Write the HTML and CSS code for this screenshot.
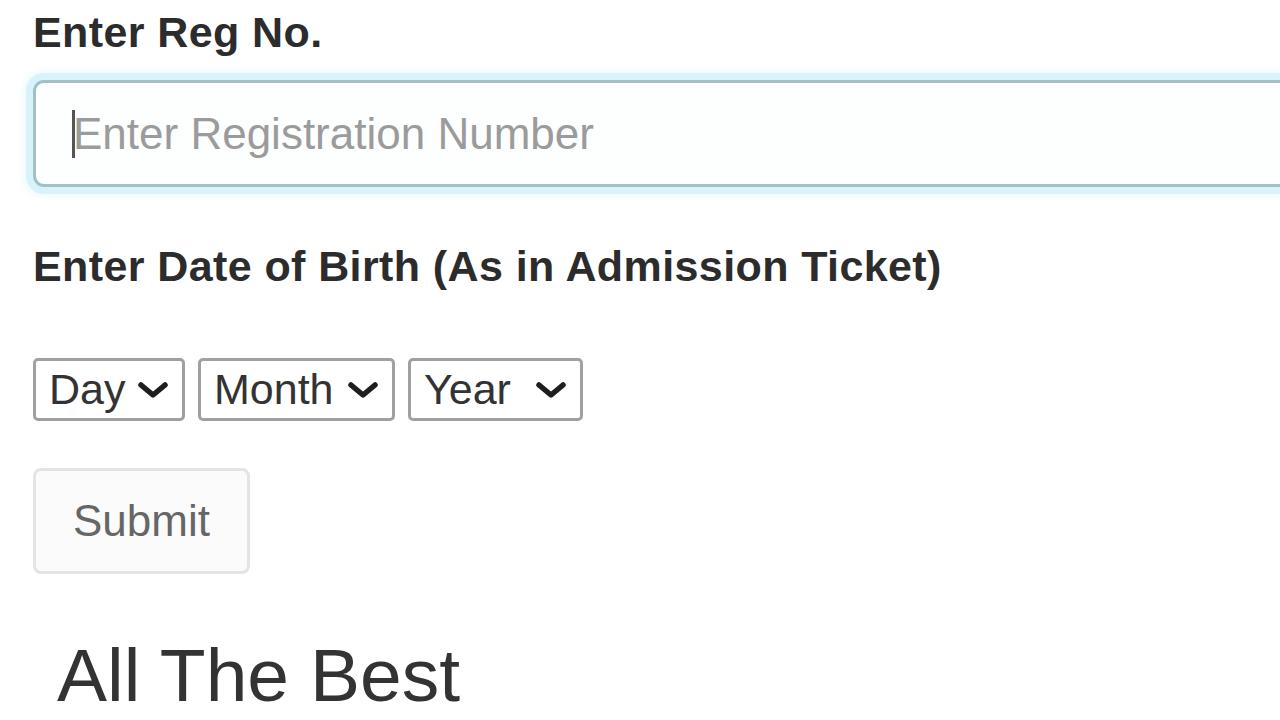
FILE: index.html
```html
<!DOCTYPE html>
<html lang="en">
<head>
    <meta charset="UTF-8">
    <meta name="viewport" content="width=device-width, initial-scale=1.0">
    <title>Result - Enter Registration</title>
    <link rel="stylesheet" href="styles.css">
</head>
<body>
    <form class="result-form">
        <label class="field-label" for="regNo">Enter Reg No.</label>
        <div class="reg-input">
            <span class="caret"></span>
            <span class="placeholder">Enter Registration Number</span>
        </div>

        <label class="field-label dob-label">Enter Date of Birth (As in Admission Ticket)</label>

        <div class="dob-row">
            <div class="dob-select dob-day">
                <span>Day</span>
                <svg class="chev" viewBox="0 0 30 16"><path d="M3 3 L15 13 L27 3" /></svg>
            </div>
            <div class="dob-select dob-month">
                <span>Month</span>
                <svg class="chev" viewBox="0 0 30 16"><path d="M3 3 L15 13 L27 3" /></svg>
            </div>
            <div class="dob-select dob-year">
                <span>Year</span>
                <svg class="chev" viewBox="0 0 30 16"><path d="M3 3 L15 13 L27 3" /></svg>
            </div>
        </div>

        <button type="button" class="btn-submit">Submit</button>
    </form>

    <h2 class="wish">All The Best</h2>
</body>
</html>
```

FILE: styles.css
```css
* {
    margin: 0;
    padding: 0;
    box-sizing: border-box;
}

body {
    font-family: "Liberation Sans", Arial, sans-serif;
    background: #ffffff;
    color: #262626;
    overflow: hidden;
    height: 720px;
    padding-left: 33px;
}

.result-form {
    width: 1400px;
}

.field-label {
    display: block;
    font-size: 43px;
    font-weight: 700;
    line-height: 64px;
    letter-spacing: 0.4px;
    color: #2c2c2c;
}

.reg-input {
    margin-top: 16px;
    height: 107px;
    border: 3px solid #a2c0c8;
    border-radius: 11px;
    background: #fdfefe;
    box-shadow: 0 0 0 7px rgba(196, 236, 248, 0.55), 0 0 6px 10px rgba(225, 246, 252, 0.5);
    display: flex;
    align-items: center;
    padding-left: 37px;
    position: relative;
}

.caret {
    position: absolute;
    left: 36px;
    top: 27px;
    width: 3px;
    height: 48px;
    background: #555;
}

.placeholder {
    font-size: 44px;
    color: #9b9b9b;
}

.dob-label {
    margin-top: 47px;
}

.dob-row {
    display: flex;
    gap: 13px;
    margin-top: 60px;
}

.dob-select {
    height: 63px;
    border: 3px solid #a0a0a0;
    border-radius: 5px;
    background: #fff;
    display: flex;
    align-items: center;
    padding-left: 13px;
    font-size: 43px;
    color: #333;
}

.dob-day { width: 152px; }
.dob-month { width: 197px; }
.dob-year { width: 175px; }

.dob-select span {
    flex: 1;
}

.chev {
    width: 30px;
    height: 16px;
    margin-right: 14px;
    fill: none;
    stroke: #1e1e1e;
    stroke-width: 5.5;
    stroke-linecap: round;
    stroke-linejoin: round;
}

.btn-submit {
    display: block;
    margin-top: 47px;
    width: 217px;
    height: 106px;
    border: 3px solid #e4e4e4;
    border-radius: 8px;
    background: #fbfbfb;
    font-family: "Liberation Sans", Arial, sans-serif;
    font-size: 44px;
    color: #666;
}

.wish {
    margin-top: 56px;
    margin-left: 24px;
    font-size: 75px;
    font-weight: 400;
    line-height: 90px;
    color: #333;
}
```
